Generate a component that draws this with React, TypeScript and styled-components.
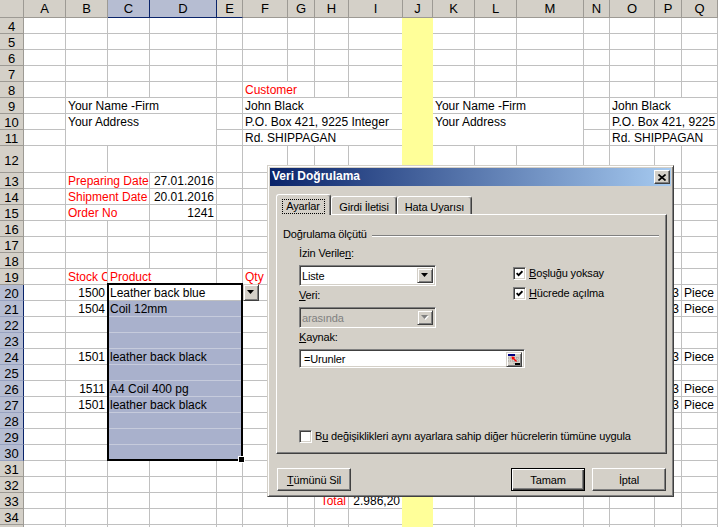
import React from "react";
import styled, { createGlobalStyle, css } from "styled-components";

const FACE = "#d4d0c8";
const SHADOW = "#808080";
const DARK = "#404040";
const GRID = "#c0c0c0";
const HEAD_LINE = "#9d9a94";
const HEAD_SEL = "#b6bdd2";
const NAVY = "#0a246a";
const SEL = "#a9b1cc";
const SEL_LINE = "#c6cbdc";
const YELLOW = "#ffff99";

const GlobalStyle = createGlobalStyle`
  html, body {
    margin: 0;
    padding: 0;
    width: 718px;
    height: 527px;
    overflow: hidden;
    background: #ffffff;
  }
  body {
    font-family: "Liberation Sans", Arial, sans-serif;
  }
`;

const COL_LETTERS = "ABCDEFGHIJKLMNOPQ".split("");
const COL_WIDTHS = [42, 42, 42, 67, 26, 45, 27, 34, 54, 30, 42, 42, 67, 26, 45, 27, 36];
const FIRST_ROW = 4;
const LAST_ROW = 35;
const SHEET_ROWS = Array.from({ length: LAST_ROW - FIRST_ROW + 1 }, (_, i) => FIRST_ROW + i);

// column numbers (A = 1)
const B = 2, C = 3, D = 4, F = 6, H = 8, I = 9, J = 10, K = 11, O = 15, P = 16, Q = 17;

type Tone = "plain" | "yellow" | "sel" | "active";

type Entry = {
  c: number;
  text?: string;
  span?: number;
  rows?: number;
  red?: boolean;
  right?: boolean;
  top?: boolean;
  tone?: Tone;
};

const fixed: Record<number, Entry[]> = {
  8: [{ c: F, span: 2, text: "Customer", red: true }],
  9: [
    { c: B, span: 3, text: "Your Name -Firm" },
    { c: F, span: 4, text: "John Black" },
    { c: K, span: 3, text: "Your Name -Firm" },
    { c: O, span: 3, text: "John Black" },
  ],
  10: [
    { c: B, span: 3, rows: 2, top: true, text: "Your Address" },
    { c: F, span: 4, text: "P.O. Box 421, 9225 Integer" },
    { c: K, span: 3, rows: 2, top: true, text: "Your Address" },
    { c: O, span: 3, text: "P.O. Box 421, 9225 Integer" },
  ],
  11: [
    { c: F, span: 4, text: "Rd. SHIPPAGAN" },
    { c: O, span: 3, text: "Rd. SHIPPAGAN" },
  ],
  12: [{ c: C, span: 2 }],
  13: [
    { c: B, span: 2, text: "Preparing Date", red: true },
    { c: D, text: "27.01.2016", right: true },
  ],
  14: [
    { c: B, span: 2, text: "Shipment Date", red: true },
    { c: D, text: "20.01.2016", right: true },
  ],
  15: [
    { c: B, span: 2, text: "Order No", red: true },
    { c: D, text: "1241", right: true },
  ],
  19: [
    { c: B, text: "Stock Code", red: true },
    { c: C, span: 2, text: "Product", red: true },
    { c: F, text: "Qty", red: true },
  ],
  33: [
    { c: H, text: "Total", red: true, right: true },
    { c: I, text: "2.986,20", right: true },
  ],
};

const products: Record<number, [string, string]> = {
  20: ["1500", "Leather back blue"],
  21: ["1504", "Coil 12mm"],
  24: ["1501", "leather back black"],
  26: ["1511", "A4 Coil 400 pg"],
  27: ["1501", "leather back black"],
};

const SEL_FIRST = 20;
const SEL_LAST = 30;

const entriesFor = (r: number): Entry[] => {
  const list = [...(fixed[r] ?? [])];
  if (r >= SEL_FIRST && r <= SEL_LAST) {
    const p = products[r];
    if (p) {
      list.push({ c: B, text: p[0], right: true });
      list.push({ c: P, text: "3", right: true });
      list.push({ c: Q, text: "Piece" });
    }
    list.push({ c: C, span: 3, text: p?.[1], tone: r === SEL_FIRST ? "active" : "sel" });
  }
  return list;
};

const gridRow = (r: number) => r - FIRST_ROW + 2;

/* ---------- sheet ---------- */

const Page = styled.div`
  position: relative;
  width: 718px;
  height: 527px;
  overflow: hidden;
`;

const Sheet = styled.div`
  display: grid;
  grid-template-columns: 24px ${COL_WIDTHS.map((w) => `${w}px`).join(" ")};
  grid-template-rows: 18px ${SHEET_ROWS.map((r) => (r === 12 ? "27px" : "16px")).join(" ")};
  width: 718px;
  font-family: "Liberation Sans", Arial, sans-serif;
  font-size: 12px;
  color: #000;
`;

const Corner = styled.div`
  grid-row: 1;
  grid-column: 1;
  background: ${FACE};
  border-right: 1px solid ${HEAD_LINE};
  border-bottom: 1px solid ${HEAD_LINE};
`;

const ColHead = styled.div<{ $col: number; $sel?: boolean; $edge?: boolean }>`
  grid-row: 1;
  grid-column: ${(p) => p.$col};
  box-sizing: border-box;
  display: flex;
  align-items: center;
  justify-content: center;
  font-size: 13px;
  line-height: 15px;
  background: ${(p) => (p.$sel ? HEAD_SEL : FACE)};
  border-right: 1px solid ${(p) => (p.$sel ? NAVY : HEAD_LINE)};
  border-bottom: 1px solid ${(p) => (p.$sel || p.$edge ? NAVY : HEAD_LINE)};
`;

const RowHead = styled.div<{ $row: number; $sel?: boolean }>`
  grid-row: ${(p) => p.$row};
  grid-column: 1;
  box-sizing: border-box;
  display: flex;
  align-items: center;
  justify-content: center;
  padding-top: 2px;
  font-size: 13px;
  line-height: 15px;
  background: ${(p) => (p.$sel ? HEAD_SEL : FACE)};
  border-right: 1px solid ${(p) => (p.$sel ? NAVY : HEAD_LINE)};
  border-bottom: 1px solid ${(p) => (p.$sel ? "#98a2c0" : HEAD_LINE)};
`;

const Cell = styled.div<{
  $row: number;
  $col: number;
  $span: number;
  $rows: number;
  $tone: Tone;
  $red?: boolean;
  $right?: boolean;
  $top?: boolean;
}>`
  grid-row: ${(p) => p.$row} / span ${(p) => p.$rows};
  grid-column: ${(p) => p.$col} / span ${(p) => p.$span};
  box-sizing: border-box;
  display: flex;
  align-items: ${(p) => (p.$top ? "flex-start" : "flex-end")};
  justify-content: ${(p) => (p.$right ? "flex-end" : "flex-start")};
  padding: ${(p) => (p.$top ? "1px 2px 0" : "0 2px")};
  overflow: hidden;
  white-space: nowrap;
  line-height: 14px;
  color: ${(p) => (p.$red ? "#ff0000" : "#000000")};
  background: #ffffff;
  border-right: 1px solid ${GRID};
  border-bottom: 1px solid ${GRID};
  ${(p) =>
    p.$tone === "yellow" &&
    css`
      margin-left: -1px;
      background: ${YELLOW};
      border-color: ${YELLOW};
    `}
  ${(p) =>
    p.$tone === "sel" &&
    css`
      background: ${SEL};
      border-bottom-color: ${SEL_LINE};
    `}
`;

const Selection = styled.div<{ $r1: number; $r2: number; $c1: number; $c2: number }>`
  grid-row: ${(p) => p.$r1} / ${(p) => p.$r2 + 1};
  grid-column: ${(p) => p.$c1} / ${(p) => p.$c2 + 1};
  position: relative;
  z-index: 2;
  margin: -2px 0 0 -1px;
  box-sizing: border-box;
  border: 2px solid #000;
  pointer-events: none;
`;

const FillHandle = styled.span`
  position: absolute;
  right: -4px;
  bottom: -4px;
  width: 5px;
  height: 5px;
  background: #000;
  border: 1px solid #fff;
`;

const ArrowButton = styled.span`
  box-sizing: border-box;
  flex: none;
  width: 16px;
  height: 100%;
  display: flex;
  align-items: center;
  justify-content: center;
  background: ${FACE};
  border: 1px solid;
  border-color: ${FACE} ${DARK} ${DARK} ${FACE};
  box-shadow: inset 1px 1px 0 #ffffff, inset -1px -1px 0 ${SHADOW};
`;

const CellDrop = styled(ArrowButton)<{ $row: number; $col: number }>`
  grid-row: ${(p) => p.$row};
  grid-column: ${(p) => p.$col};
  align-self: start;
  justify-self: start;
  position: relative;
  z-index: 3;
  height: 17px;
  margin-top: -1px;
`;

const DownArrow = ({ disabled }: { disabled?: boolean }) => (
  <svg width="8" height="5" viewBox="0 0 8 5">
    {disabled && <path d="M1 1h7l-3.5 4z" fill="#ffffff" />}
    <path d="M0 0h7l-3.5 4z" fill={disabled ? SHADOW : "#000"} />
  </svg>
);

/* ---------- dialog ---------- */

const Window = styled.div`
  position: absolute;
  left: 267px;
  top: 165px;
  z-index: 10;
  width: 407px;
  height: 332px;
  box-sizing: border-box;
  display: flex;
  flex-direction: column;
  padding: 2px;
  background: ${FACE};
  border: 1px solid;
  border-color: ${FACE} ${DARK} ${DARK} ${FACE};
  box-shadow: inset 1px 1px 0 #ffffff, inset -1px -1px 0 ${SHADOW};
  font-family: "Liberation Sans", Arial, sans-serif;
  font-size: 11px;
  letter-spacing: -0.15px;
  color: #000;
`;

const TitleBar = styled.div`
  flex: none;
  height: 18px;
  display: flex;
  align-items: center;
  justify-content: space-between;
  padding: 0 1px 0 2px;
  background: linear-gradient(to right, #0a246a, #a6caf0);
`;

const Title = styled.span`
  align-self: flex-start;
  margin-top: 1px;
  font-size: 12px;
  font-weight: bold;
  line-height: 14px;
  letter-spacing: 0;
  color: #ffffff;
`;

const CloseButton = styled.span`
  box-sizing: border-box;
  width: 16px;
  height: 14px;
  display: flex;
  align-items: center;
  justify-content: center;
  background: ${FACE};
  border: 1px solid;
  border-color: #ffffff ${DARK} ${DARK} #ffffff;
  box-shadow: inset -1px -1px 0 ${SHADOW};
`;

const Body = styled.div`
  flex: 1;
  display: flex;
  flex-direction: column;
  padding: 8px 4px 0 6px;
`;

const TabStrip = styled.div`
  position: relative;
  z-index: 1;
  height: 20px;
  display: flex;
  align-items: flex-end;
`;

const Tab = styled.div<{ $active?: boolean; $w: number }>`
  box-sizing: border-box;
  width: ${(p) => p.$w}px;
  height: ${(p) => (p.$active ? 21 : 18)}px;
  margin-bottom: ${(p) => (p.$active ? -1 : 0)}px;
  display: flex;
  align-items: center;
  justify-content: center;
  padding-top: 2px;
  background: ${FACE};
  border: 1px solid;
  border-bottom: none;
  border-color: #ffffff ${DARK} transparent #ffffff;
  border-radius: 3px 3px 0 0;
  box-shadow: inset -1px 0 0 ${SHADOW};
`;

const Focus = styled.span`
  padding: 0 4px 0 3px;
  line-height: 13px;
  outline: 1px dotted #000;
`;

const Panel = styled.div`
  box-sizing: border-box;
  height: 240px;
  display: flex;
  flex-direction: column;
  padding: 13px 7px 10px 6px;
  border: 1px solid;
  border-color: #ffffff ${DARK} ${DARK} #ffffff;
  box-shadow: inset -1px -1px 0 ${SHADOW};
`;

const GroupHead = styled.div`
  display: flex;
  align-items: center;
  gap: 5px;
  height: 13px;
  line-height: 13px;
`;

const Etch = styled.span`
  flex: 1;
  margin-top: 3px;
  border-top: 1px solid ${SHADOW};
  border-bottom: 1px solid #ffffff;
`;

const Criteria = styled.div`
  display: flex;
  flex-direction: column;
  gap: 3px;
  margin: 6px 0 0 16px;
`;

const TopRow = styled.div`
  display: flex;
`;

const FieldColumn = styled.div`
  width: 214px;
  display: flex;
  flex-direction: column;
  gap: 3px;
`;

const Field = styled.div`
  display: flex;
  flex-direction: column;
  gap: 5px;
`;

const Label = styled.span`
  line-height: 13px;
`;

const Key = styled.span`
  text-decoration: underline;
`;

const Sunken = styled.div<{ $w: number; $h: number; $disabled?: boolean }>`
  box-sizing: border-box;
  width: ${(p) => p.$w}px;
  height: ${(p) => p.$h}px;
  display: flex;
  padding: 2px;
  background: ${(p) => (p.$disabled ? FACE : "#ffffff")};
  color: ${(p) => (p.$disabled ? SHADOW : "#000")};
  border: 1px solid;
  border-color: ${SHADOW} #ffffff #ffffff ${SHADOW};
  box-shadow: inset 1px 1px 0 ${DARK}, inset -1px -1px 0 ${FACE};
`;

const FieldText = styled.span<{ $pad?: number }>`
  flex: 1;
  display: flex;
  align-items: center;
  padding-left: ${(p) => p.$pad ?? 0}px;
`;

const CheckColumn = styled.div`
  display: flex;
  flex-direction: column;
  gap: 7px;
  padding-top: 20px;
`;

const CheckRow = styled.label<{ $bottom?: boolean }>`
  display: flex;
  align-items: center;
  gap: 3px;
  height: 13px;
  line-height: 13px;
  ${(p) =>
    p.$bottom &&
    css`
      margin: auto 0 0 16px;
    `}
`;

const Box = styled.span`
  box-sizing: border-box;
  flex: none;
  width: 13px;
  height: 13px;
  display: flex;
  align-items: center;
  justify-content: center;
  background: #ffffff;
  border: 1px solid;
  border-color: ${SHADOW} #ffffff #ffffff ${SHADOW};
  box-shadow: inset 1px 1px 0 ${DARK}, inset -1px -1px 0 ${FACE};
`;

const ButtonRow = styled.div`
  display: flex;
  justify-content: space-between;
  margin-top: 14px;
  padding: 0 1px;
`;

const ButtonGroup = styled.div`
  display: flex;
  gap: 7px;
`;

const PushButton = styled.button<{ $default?: boolean }>`
  box-sizing: border-box;
  width: 74px;
  height: 23px;
  margin: 0;
  padding: 0;
  font: inherit;
  letter-spacing: inherit;
  color: #000;
  background: ${FACE};
  border: 1px solid;
  border-color: #ffffff ${DARK} ${DARK} #ffffff;
  box-shadow: inset -1px -1px 0 ${SHADOW};
  ${(p) =>
    p.$default &&
    css`
      border-color: #000;
      box-shadow: inset 1px 1px 0 #ffffff, inset -1px -1px 0 ${DARK}, inset -2px -2px 0 ${SHADOW};
    `}
`;

const RefButton = styled(ArrowButton)`
  height: 15px;
`;

const Check = ({ on }: { on?: boolean }) =>
  on ? (
    <svg width="7" height="7" viewBox="0 0 7 7">
      <path d="M0.6 3.2 L2.6 5.2 L6.4 1.2" fill="none" stroke="#000" strokeWidth="1.8" />
    </svg>
  ) : null;

const RefIcon = () => (
  <svg width="12" height="11" viewBox="0 0 12 11">
    <rect x="0" y="0" width="7" height="2" fill="#000080" />
    <path d="M0 4h12M0 7h12M6 3v8M9 3v8" stroke="#9a9a9a" strokeWidth="1" strokeDasharray="1 1" />
    <rect x="7" y="9" width="5" height="2" fill="#000" />
    <path d="M8.5 7.5 L4.5 3.5" stroke="#ff0000" strokeWidth="1.4" />
    <path d="M3.5 2.5 L7 3 L4 6z" fill="#ff0000" />
  </svg>
);

const CloseGlyph = () => (
  <svg width="8" height="7" viewBox="0 0 8 7">
    <path d="M0.5 0.5 L7.5 6.5 M7.5 0.5 L0.5 6.5" stroke="#000" strokeWidth="1.6" />
  </svg>
);

const ValidationDialog = () => (
  <Window>
    <TitleBar>
      <Title>Veri Doğrulama</Title>
      <CloseButton>
        <CloseGlyph />
      </CloseButton>
    </TitleBar>
    <Body>
      <TabStrip>
        <Tab $active $w={55}>
          <Focus>Ayarlar</Focus>
        </Tab>
        <Tab $w={66}>Girdi İletisi</Tab>
        <Tab $w={75}>Hata Uyarısı</Tab>
      </TabStrip>
      <Panel>
        <GroupHead>
          <span>Doğrulama ölçütü</span>
          <Etch />
        </GroupHead>
        <Criteria>
          <TopRow>
            <FieldColumn>
              <Field>
                <Label>
                  İzin Verile<Key>n</Key>:
                </Label>
                <Sunken $w={137} $h={21}>
                  <FieldText>Liste</FieldText>
                  <ArrowButton>
                    <DownArrow />
                  </ArrowButton>
                </Sunken>
              </Field>
              <Field>
                <Label>
                  <Key>V</Key>eri:
                </Label>
                <Sunken $w={137} $h={21} $disabled>
                  <FieldText>arasında</FieldText>
                  <ArrowButton>
                    <DownArrow disabled />
                  </ArrowButton>
                </Sunken>
              </Field>
            </FieldColumn>
            <CheckColumn>
              <CheckRow>
                <Box>
                  <Check on />
                </Box>
                <span>
                  <Key>B</Key>oşluğu yoksay
                </span>
              </CheckRow>
              <CheckRow>
                <Box>
                  <Check on />
                </Box>
                <span>
                  <Key>H</Key>ücrede açılma
                </span>
              </CheckRow>
            </CheckColumn>
          </TopRow>
          <Field>
            <Label>
              <Key>K</Key>aynak:
            </Label>
            <Sunken $w={226} $h={19}>
              <FieldText $pad={2}>=Urunler</FieldText>
              <RefButton>
                <RefIcon />
              </RefButton>
            </Sunken>
          </Field>
        </Criteria>
        <CheckRow $bottom>
          <Box />
          <span>
            B<Key>u</Key> değişiklikleri aynı ayarlara sahip diğer hücrelerin tümüne uygula
          </span>
        </CheckRow>
      </Panel>
      <ButtonRow>
        <PushButton>
          <Key>T</Key>ümünü Sil
        </PushButton>
        <ButtonGroup>
          <PushButton $default>Tamam</PushButton>
          <PushButton>İptal</PushButton>
        </ButtonGroup>
      </ButtonRow>
    </Body>
  </Window>
);

/* ---------- page ---------- */

const Worksheet = () => {
  const nodes: React.ReactNode[] = [];
  const covered = new Set<string>();

  SHEET_ROWS.forEach((r) => {
    entriesFor(r).forEach((e) => {
      const span = e.span ?? 1;
      const rows = e.rows ?? 1;
      for (let rr = r; rr < r + rows; rr++) {
        for (let cc = e.c; cc < e.c + span; cc++) covered.add(`${rr}:${cc}`);
      }
      nodes.push(
        <Cell
          key={`e${r}-${e.c}`}
          $row={gridRow(r)}
          $col={e.c + 1}
          $span={span}
          $rows={rows}
          $tone={e.tone ?? "plain"}
          $red={e.red}
          $right={e.right}
          $top={e.top}
        >
          {e.text}
        </Cell>
      );
    });
  });

  SHEET_ROWS.forEach((r) => {
    COL_LETTERS.forEach((_, i) => {
      const c = i + 1;
      if (covered.has(`${r}:${c}`)) return;
      nodes.push(
        <Cell
          key={`x${r}-${c}`}
          $row={gridRow(r)}
          $col={c + 1}
          $span={1}
          $rows={1}
          $tone={c === J ? "yellow" : "plain"}
        />
      );
    });
  });

  return (
    <Sheet>
      <Corner />
      {COL_LETTERS.map((l, i) => (
        <ColHead key={l} $col={i + 2} $sel={l === "C" || l === "D"} $edge={l === "E"}>
          {l}
        </ColHead>
      ))}
      {SHEET_ROWS.map((r) => (
        <RowHead key={r} $row={gridRow(r)} $sel={r >= SEL_FIRST && r <= SEL_LAST}>
          {r}
        </RowHead>
      ))}
      {nodes}
      <Selection $r1={gridRow(SEL_FIRST)} $r2={gridRow(SEL_LAST)} $c1={C + 1} $c2={C + 3}>
        <FillHandle />
      </Selection>
      <CellDrop $row={gridRow(SEL_FIRST)} $col={F + 1}>
        <DownArrow />
      </CellDrop>
    </Sheet>
  );
};

const App = () => (
  <Page>
    <GlobalStyle />
    <Worksheet />
    <ValidationDialog />
  </Page>
);

export default App;
